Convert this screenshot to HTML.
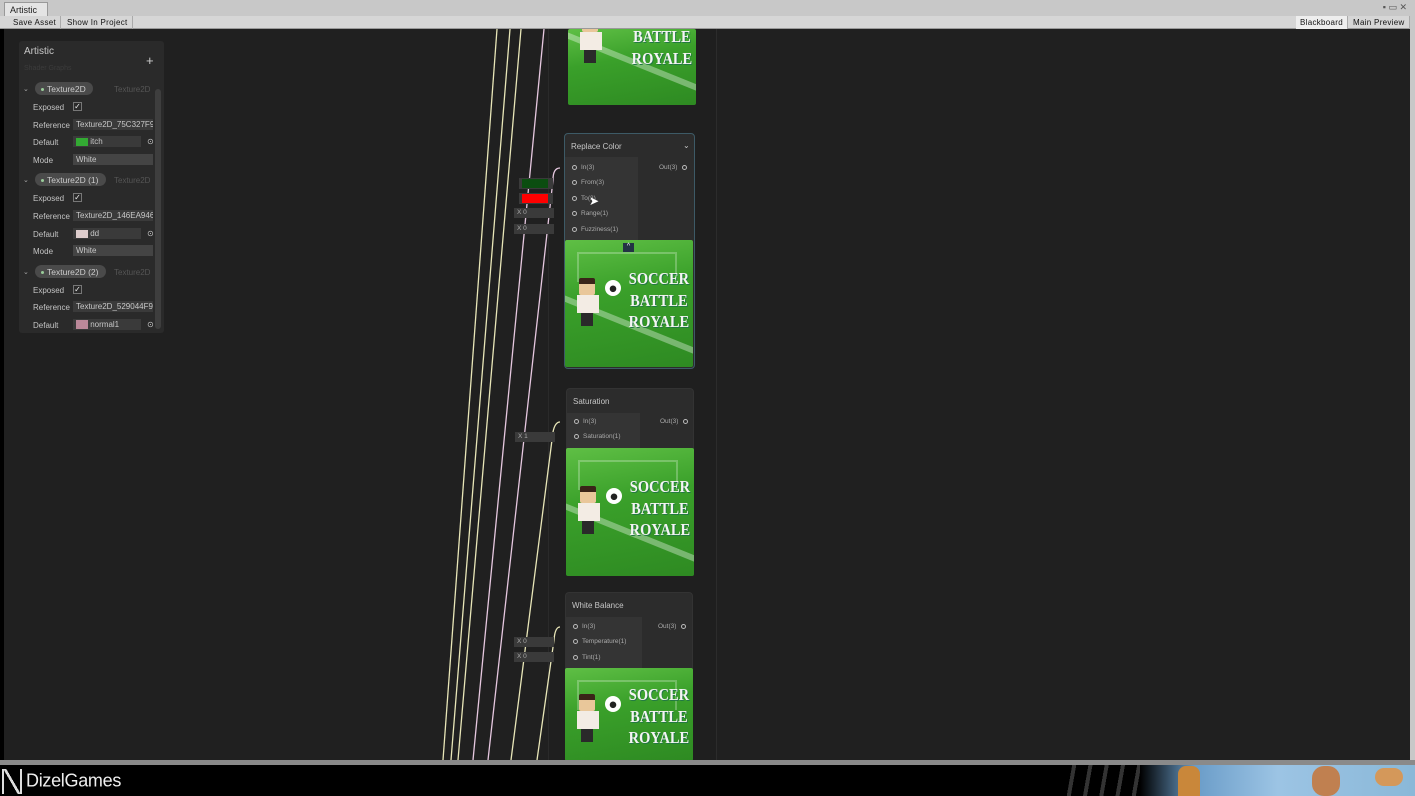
<!DOCTYPE html>
<html><head><meta charset="utf-8"><style>
*{box-sizing:border-box;margin:0;padding:0}
body{width:1415px;height:796px;background:#000;position:relative;overflow:hidden;font-family:"Liberation Sans","DejaVu Sans",sans-serif}
.top{position:absolute;left:0;top:0;width:1415px;height:16px;background:#c8c8c8}
.tab{position:absolute;left:4px;top:2px;width:44px;height:14px;background:#e4e4e4;border:1px solid #999;border-bottom:none;font-size:9px;color:#222;padding:2px 0 0 5px}
.tb{position:absolute;left:0;top:16px;width:1415px;height:13px;background:#d6d6d6;border-bottom:1px solid #999}
.btn{position:absolute;top:16px;height:13px;font-size:8px;color:#111;padding:2px 4px 0;border-right:1px solid #aaa;letter-spacing:.3px}
.canvas{position:absolute;left:4px;top:29px;width:1406px;height:732px;background:#202020}
.band{position:absolute;left:548px;top:29px;width:169px;height:732px;background:#1f1f1f;border-left:1px solid #2a2a2a;border-right:1px solid #2c2c2c}
.rightbar{position:absolute;left:1410px;top:16px;width:5px;height:745px;background:#c8c8c8}
.botbar{position:absolute;left:0;top:760px;width:1415px;height:5px;background:#8a8a8a}
.bb{position:absolute;left:19px;top:41px;width:145px;height:292px;background:#2a2a2a;border-radius:3px}
.bb .h{position:absolute;left:5px;top:5px;font-size:10px;color:#c8c8c8}
.bb .s{position:absolute;left:5px;top:24px;font-size:7px;color:#3c3c3c}
.bb .plus{position:absolute;left:127px;top:12px;color:#ccc;font-size:13px}
.row{position:absolute;left:14px;font-size:8px;color:#c4c4c4}
.pill{position:absolute;left:16px;height:13px;background:#4a4a4a;border-radius:7px;font-size:8.5px;color:#ccc;padding:1.5px 7px 0 6px}
.pill b{display:inline-block;width:3px;height:3px;background:#9c9;border-radius:2px;margin-right:3px;vertical-align:middle}
.tt{position:absolute;left:95px;font-size:8px;color:#555}
.car{position:absolute;left:4px;font-size:7px;color:#aaa}
.fld{position:absolute;left:54px;height:11px;background:#3a3a3a;font-size:8px;color:#c8c8c8;padding:1px 3px;white-space:nowrap;overflow:hidden;width:80px}
.cb{position:absolute;left:54px;width:9px;height:9px;border:1px solid #777;color:#eee;font-size:8px;line-height:8px;text-align:center}
.sbar{position:absolute;left:136px;top:48px;width:6px;height:240px;background:#3e3e3e;border-radius:3px}
.node{position:absolute;background:#2c2c2c;border-radius:4px;border:1px solid #333}
.nt{position:absolute;left:6px;font-size:8px;color:#c6c6c6}
.port{position:absolute;font-size:6.5px;color:#aaa}
.port i{display:inline-block;width:5px;height:5px;border:1px solid #bbb;border-radius:3px;margin-right:4px;vertical-align:middle}
.tile{position:absolute;overflow:hidden;border-radius:2px;background:linear-gradient(170deg,#5fbf45 0%,#3aa02a 40%,#2e8a22 100%)}
.tile .t{position:absolute;right:4px;font-family:"Liberation Serif",serif;font-weight:bold;color:#f4f4f4;font-size:17px;line-height:21.5px;text-align:center;transform:scaleX(.85);transform-origin:right;text-shadow:1px 1px 0 #274}
.tile .g{position:absolute;left:12px;top:12px;width:100px;height:30px;border:2px solid rgba(255,255,255,.25);border-bottom:none}
.tile .st{position:absolute;left:-20px;top:88px;width:200px;height:6px;background:rgba(255,255,255,.35);transform:rotate(22deg)}
.tile .p{position:absolute;left:8px;top:38px;width:30px;height:48px}
.tile .p .hd{position:absolute;left:6px;top:0;width:16px;height:17px;background:#e9c79a;border-top:6px solid #3a2418;border-radius:2px}
.tile .p .bd{position:absolute;left:4px;top:17px;width:22px;height:18px;background:#f3ece4}
.tile .p .lg{position:absolute;left:8px;top:35px;width:12px;height:13px;background:#2a2a2a}
.tile .ball{position:absolute;left:40px;top:40px;width:16px;height:16px;border-radius:50%;background:radial-gradient(circle at 50% 55%,#222 0 3px,#fff 3.5px)}
.inp{position:absolute;background:#3a3a3a;font-size:6.5px;color:#aaa;height:10px;padding:1px 3px}
.logo{position:absolute;left:2px;top:769px;color:#eee;font-size:18px;letter-spacing:-.3px}
</style></head><body>
<div class="top"></div><div class="tab">Artistic</div>
<div style="position:absolute;right:8px;top:2px;font-size:9px;color:#555">▪ ▭ ✕</div>
<div class="tb"></div>
<div class="btn" style="left:9px">Save Asset</div>
<div class="btn" style="left:63px">Show In Project</div>
<div class="btn" style="left:1296px;background:#eee">Blackboard</div>
<div class="btn" style="left:1349px">Main Preview</div>
<div class="canvas"></div>
<div class="band"></div>
<svg style="position:absolute;left:0;top:0" width="1415" height="796">
<g fill="none" stroke-width="1.3">
<path d="M497 29 L443 760" stroke="#e8e6b8"/>
<path d="M510 29 L451 760" stroke="#e8e6b8"/>
<path d="M521 29 L458 760" stroke="#e8e6b8"/>
<path d="M544 29 L473 760" stroke="#e6c8e0"/>
<path d="M560 168 Q553 168 553 180 L488 760" stroke="#e6c8e0"/>
<path d="M560 422 Q555 422 553 432 L511 760" stroke="#e8e6b8"/>
<path d="M560 627 Q555 627 554 640 L537 760" stroke="#e8e6b8"/>
</g></svg>
<div class="bb"><div class="h">Artistic</div><div class="s">Shader Graphs</div><div class="plus">+</div><div class="sbar"></div>
<div class="car" style="top:44px">⌄</div><div class="pill" style="top:41px"><b></b>Texture2D</div><div class="tt" style="top:44px">Texture2D</div>
<div class="row" style="top:62px">Exposed</div><div class="cb" style="top:61px">✓</div>
<div class="row" style="top:80px">Reference</div><div class="fld" style="top:78px;width:80px">Texture2D_75C327F9</div>
<div class="row" style="top:97px">Default</div><div class="fld" style="top:95px;width:68px"><span style="display:inline-block;width:12px;height:8px;background:#3a3;vertical-align:middle"></span> itch</div><div class="row" style="top:96px;left:128px">⊙</div>
<div class="row" style="top:115px">Mode</div><div class="fld" style="top:113px;background:#444">White</div>
<div class="car" style="top:135px">⌄</div><div class="pill" style="top:132px"><b></b>Texture2D (1)</div><div class="tt" style="top:135px">Texture2D</div>
<div class="row" style="top:153px">Exposed</div><div class="cb" style="top:152px">✓</div>
<div class="row" style="top:171px">Reference</div><div class="fld" style="top:169px">Texture2D_146EA946</div>
<div class="row" style="top:189px">Default</div><div class="fld" style="top:187px;width:68px"><span style="display:inline-block;width:12px;height:8px;background:#dcc;vertical-align:middle"></span> dd</div><div class="row" style="top:188px;left:128px">⊙</div>
<div class="row" style="top:206px">Mode</div><div class="fld" style="top:204px;background:#444">White</div>
<div class="car" style="top:227px">⌄</div><div class="pill" style="top:224px"><b></b>Texture2D (2)</div><div class="tt" style="top:227px">Texture2D</div>
<div class="row" style="top:245px">Exposed</div><div class="cb" style="top:244px">✓</div>
<div class="row" style="top:262px">Reference</div><div class="fld" style="top:260px">Texture2D_529044F9</div>
<div class="row" style="top:280px">Default</div><div class="fld" style="top:278px;width:68px"><span style="display:inline-block;width:12px;height:9px;background:#b89;vertical-align:middle"></span> normal1</div><div class="row" style="top:279px;left:128px">⊙</div>
</div>

<div class="tile" style="left:568px;top:29px;width:128px;height:76px"><div class="st" style="top:36px"></div><div class="p" style="top:-14px"><div class="hd"></div><div class="bd"></div><div class="lg"></div></div><div class="t" style="top:-3px">BATTLE<br>ROYALE</div></div>

<div class="node" style="left:564px;top:133px;width:131px;height:236px;border-color:#3d5a66">
<div class="nt" style="top:8px">Replace Color</div><div class="nt" style="left:118px;top:7px">⌄</div>
<div style="position:absolute;left:0;top:23px;width:73px;height:83px;background:#343434"></div>
<div class="port" style="left:7px;top:30px"><i></i>In(3)</div>
<div class="port" style="left:7px;top:45px"><i></i>From(3)</div>
<div class="port" style="left:7px;top:61px"><i></i>To(3)</div>
<div class="port" style="left:7px;top:76px"><i></i>Range(1)</div>
<div class="port" style="left:7px;top:92px"><i></i>Fuzziness(1)</div>
<div class="port" style="left:94px;top:30px">Out(3) <i style="margin:0 0 0 3px"></i></div>
</div>
<div class="inp" style="left:519px;top:178px;width:34px;height:11px"><div style="width:26px;height:9px;background:#0b4d10"></div></div>
<div class="inp" style="left:519px;top:193px;width:34px;height:11px"><div style="width:26px;height:9px;background:#f00"></div></div>
<div class="inp" style="left:514px;top:208px;width:40px">X 0</div>
<div class="inp" style="left:514px;top:224px;width:40px">X 0</div>
<div class="tile" style="left:565px;top:240px;width:128px;height:127px"><div class="g"></div><div class="st"></div><div class="p"><div class="hd"></div><div class="bd"></div><div class="lg"></div></div><div class="ball"></div><div class="t" style="top:28px">SOCCER<br>BATTLE<br>ROYALE</div><div style="position:absolute;left:58px;top:3px;width:11px;height:9px;background:#234;color:#fff;font-size:7px;text-align:center">^</div></div>
<div style="position:absolute;left:589px;top:194px;color:#fff;font-size:12px">➤</div>

<div class="node" style="left:566px;top:388px;width:128px;height:188px">
<div class="nt" style="top:8px">Saturation</div>
<div style="position:absolute;left:0;top:24px;width:73px;height:36px;background:#343434"></div>
<div class="port" style="left:7px;top:29px"><i></i>In(3)</div>
<div class="port" style="left:7px;top:44px"><i></i>Saturation(1)</div>
<div class="port" style="left:93px;top:29px">Out(3) <i style="margin:0 0 0 3px"></i></div>
</div>
<div class="inp" style="left:515px;top:432px;width:40px">X 1</div>
<div class="tile" style="left:566px;top:448px;width:128px;height:128px"><div class="g"></div><div class="st"></div><div class="p"><div class="hd"></div><div class="bd"></div><div class="lg"></div></div><div class="ball"></div><div class="t" style="top:28px">SOCCER<br>BATTLE<br>ROYALE</div></div>

<div class="node" style="left:565px;top:592px;width:128px;height:170px">
<div class="nt" style="top:8px">White Balance</div>
<div style="position:absolute;left:0;top:24px;width:76px;height:52px;background:#343434"></div>
<div class="port" style="left:7px;top:30px"><i></i>In(3)</div>
<div class="port" style="left:7px;top:45px"><i></i>Temperature(1)</div>
<div class="port" style="left:7px;top:61px"><i></i>Tint(1)</div>
<div class="port" style="left:92px;top:30px">Out(3) <i style="margin:0 0 0 3px"></i></div>
</div>
<div class="inp" style="left:514px;top:637px;width:40px">X 0</div>
<div class="inp" style="left:514px;top:652px;width:40px">X 0</div>
<div class="tile" style="left:565px;top:668px;width:128px;height:93px"><div class="g"></div><div class="p" style="top:26px"><div class="hd"></div><div class="bd"></div><div class="lg"></div></div><div class="ball" style="top:28px"></div><div class="t" style="top:16px">SOCCER<br>BATTLE<br>ROYALE</div></div>

<div class="rightbar"></div>
<div class="botbar"></div>
<div class="logo"><span style="display:inline-block;width:20px;height:25px;border-left:2px solid #ddd;border-right:2px solid #ddd;vertical-align:middle;margin-right:4px;background:linear-gradient(60deg,transparent 45%,#ddd 45% 55%,transparent 55%)"></span>DizelGames</div>
<div style="position:absolute;left:1060px;top:765px;width:120px;height:31px;background:repeating-linear-gradient(100deg,#000 0 12px,#333 12px 16px)"></div>
<div style="position:absolute;left:1140px;top:765px;width:275px;height:31px;background:linear-gradient(90deg,#000 0,#6a9cc8 20%,#9cc4e4 50%,#8ab8d8 100%)"></div>
<div style="position:absolute;left:1178px;top:766px;width:22px;height:30px;background:#c9873a;border-radius:8px 8px 0 0"></div>
<div style="position:absolute;left:1312px;top:766px;width:28px;height:30px;background:#c08050;border-radius:12px"></div>
<div style="position:absolute;left:1375px;top:768px;width:28px;height:18px;background:#d4985a;border-radius:10px"></div>
</body></html>
